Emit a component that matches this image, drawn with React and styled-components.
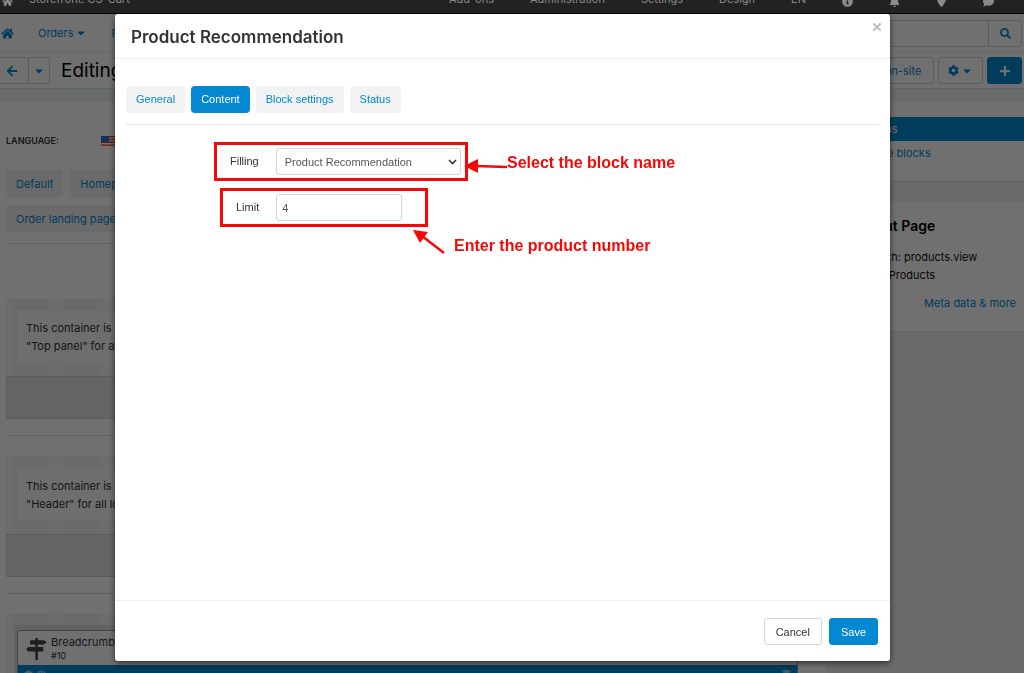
import React from 'react';
import styled, { createGlobalStyle } from 'styled-components';
import {
	FaArrowLeft,
	FaBell,
	FaCaretDown,
	FaCog,
	FaComment,
	FaHome,
	FaInfoCircle,
	FaMapMarker,
	FaPlus,
	FaPowerOff,
	FaSearch,
	FaTimes,
	FaTrashAlt
} from 'react-icons/fa';

const GlobalStyle = createGlobalStyle`
	* {
		box-sizing: border-box;
	}
	body {
		margin: 0;
		background: #eef2f2;
		color: #333;
		font: 11px/18px Inter, "Liberation Sans", sans-serif;
	}
	button, input, select {
		font: inherit;
		color: inherit;
	}
	a {
		color: #0388d1;
		text-decoration: none;
	}
	#root {
		height: 100vh;
		overflow: hidden;
	}
`;

const TopBar = styled.header`
	position: relative;
	z-index: 3;
	display: flex;
	align-items: flex-end;
	gap: 36px;
	height: 14px;
	padding: 0 30px 6px 2px;
	overflow: hidden;
	background: #222;
	border-bottom: 1px solid #000;
	color: #8a8a8a;
`;

const TopLink = styled.a`
	display: flex;
	color: inherit;
	line-height: 16px;
	white-space: nowrap;
`;

const StoreLink = styled(TopLink)`
	margin: 0 auto 0 -20px;
`;

const NavRow = styled.nav`
	display: flex;
	align-items: center;
	height: 39px;
	padding: 0 2px 0 1px;
	background: #fff;
	border-bottom: 1px solid #f0f0f0;
`;

const NavLink = styled.a`
	display: flex;
	align-items: center;
	gap: 2px;
	margin-right: 24px;
`;

const Search = styled.form`
	display: flex;
	height: 27px;
	width: 240px;
	margin-left: auto;
	border: 1px solid #c8d3da;
	border-radius: 3px;
`;

const SearchInput = styled.input`
	flex: 1;
	min-width: 0;
	border: 0;
	background: none;
`;

const SearchButton = styled.button`
	display: flex;
	align-items: center;
	justify-content: center;
	width: 33px;
	border: 0;
	border-left: 1px solid #c8d3da;
	background: none;
	color: #0388d1;
`;

const TitleRow = styled.div`
	display: flex;
	align-items: center;
	gap: 4px;
	height: 36px;
	padding: 0 2px 0 0;
	background: #fff;
	border-bottom: 1px solid #dde3e3;
`;

const BackGroup = styled.div`
	display: flex;
	margin-right: 7px;
	margin-left: -4px;
`;

const ToolButton = styled.button`
	display: flex;
	align-items: center;
	justify-content: center;
	gap: 2px;
	height: 27px;
	width: ${props => props.$width}px;
	padding: 0;
	border: 1px solid ${props => (props.$primary ? '#0388d1' : '#c8d3da')};
	border-radius: 3px;
	background: ${props => (props.$primary ? '#0388d1' : '#fff')};
	color: ${props => (props.$primary ? '#fff' : '#0388d1')};
	${BackGroup} & {
		border-radius: 0 3px 3px 0;
		margin-left: -1px;
	}
`;

const PageTitle = styled.h1`
	flex: 1;
	margin: 0;
	color: #000;
	font-size: 19px;
	font-weight: 400;
	line-height: 24px;
`;

const Columns = styled.div`
	display: grid;
	grid-template-columns: 1fr 198px;
	margin-top: 12px;
`;

const Main = styled.main`
	height: 700px;
	padding: 31px 28px 0 6px;
	background: #fff;
`;

const Language = styled.div`
	display: flex;
	align-items: center;
	gap: 42px;
	height: 18px;
	color: #333;
	font-size: 9px;
	font-weight: 600;
`;

const LayoutTabs = styled.div`
	display: flex;
	flex-wrap: wrap;
	gap: 8px 7px;
	width: 220px;
	margin-top: 20px;
`;

const LayoutTab = styled.a`
	padding: 5px 10px 4px;
	border-radius: 4px;
	background: #f2f2f2;
`;

const Rule = styled.hr`
	margin: ${props => props.$space};
	border: 0;
	border-top: 1px solid #dcdcdc;
`;

const Container = styled.section`
	height: 121px;
	display: flex;
	flex-direction: column;
	background: repeating-linear-gradient(90deg, #f0f0f0 0 34px, #f5f5f5 34px 50px) 8px 0, #f5f5f5;
`;

const Notice = styled.p`
	flex: 1;
	margin: 12px 11px 13px;
	padding: 9px 9px 8px;
	background: #fafafa;
	color: #333;
`;

const ContainerFoot = styled.div`
	height: 43px;
	border: 1px solid #cfcfcf;
	background: #e6e6e6;
`;

const BlockWrap = styled.div`
	flex: 1;
	margin: 11px 0 0 8px;
	padding: 5px 0 0 3px;
	background: #e0e0e0;
`;

const Block = styled.article`
	overflow: hidden;
	border: 1px solid #999;
	border-radius: 3px 3px 0 0;
	background: #fff;
`;

const BlockHead = styled.div`
	display: flex;
	gap: 4px;
	height: 34px;
	padding: 4px 8px;
	line-height: 14px;
	svg {
		margin-top: 3px;
	}
	small {
		display: block;
		font-size: 9px;
	}
`;

const BlockBar = styled.div`
	display: flex;
	gap: 4px;
	height: 24px;
	padding: 5px 6px;
	background: #0388d1;
	color: #b5dcf2;
	svg:last-child {
		margin-left: auto;
	}
`;

const Panel = styled.aside`
	margin-bottom: 20px;
	padding: ${props => props.$pad};
	background: #fff;
	border-bottom: 1px solid #dbe2e2;
`;

const BlockLink = styled.a`
	display: block;
	height: 24px;
	padding: 3px 21px;
	background: ${props => (props.$active ? '#0388d1' : 'transparent')};
	color: ${props => (props.$active ? '#fff' : '#0388d1')};
`;

const PanelTitle = styled.h2`
	margin: 0 0 12px;
	color: #000;
	font-size: 14px;
	font-weight: 600;
	line-height: 20px;
`;

const PanelText = styled.div`
	color: #111;
`;

const MetaLink = styled.a`
	display: block;
	margin-top: 10px;
	text-align: right;
`;

const Backdrop = styled.div`
	position: fixed;
	inset: 0;
	z-index: 2;
	display: flex;
	padding: 14px 134px 12px 115px;
	background: rgba(0, 0, 0, 0.56);
`;

const Modal = styled.div`
	flex: 1;
	display: flex;
	flex-direction: column;
	border-radius: 3px;
	background: #fff;
	box-shadow: 0 2px 6px rgba(0, 0, 0, 0.6);
	font-family: "Liberation Sans", Arial, sans-serif;
`;

const ModalHead = styled.div`
	display: flex;
	justify-content: space-between;
	height: 45px;
	padding: 12px 7px 0 16px;
	border-bottom: 1px solid #eee;
`;

const ModalTitle = styled.h3`
	margin: 0;
	color: #333;
	font: 600 17px/22px Inter, "Liberation Sans", sans-serif;
`;

const CloseButton = styled.button`
	display: flex;
	height: 12px;
	margin-top: -5px;
	padding: 0;
	border: 0;
	background: none;
	color: #c4c4c4;
`;

const ModalBody = styled.div`
	position: relative;
	flex: 1;
	padding: 27px 11px 0;
`;

const Tabs = styled.div`
	display: flex;
	gap: 6px;
	padding-bottom: 11px;
	margin-bottom: 17px;
	border-bottom: 1px solid #dde3ec;
`;

const Tab = styled.button`
	height: 27px;
	padding: 0 10px 2px;
	border: 0;
	border-radius: 4px;
	background: ${props => (props.$active ? '#0388d1' : '#f2f2f2')};
	color: ${props => (props.$active ? '#fff' : '#0388d1')};
`;

const Field = styled.div`
	display: flex;
	align-items: center;
	gap: 17px;
	width: ${props => props.$width}px;
	height: 39px;
	margin: 0 0 7px ${props => props.$indent}px;
	padding-left: 13px;
	border: 3px solid #f60808;
`;

const Label = styled.label`
	line-height: 27px;
	white-space: nowrap;
`;

const SelectWrap = styled.div`
	position: relative;
	width: 185px;
	svg {
		position: absolute;
		top: 10px;
		right: 4px;
		pointer-events: none;
	}
`;

const Select = styled.select`
	display: block;
	appearance: none;
	width: 100%;
	height: 27px;
	padding: 0 8px;
	border: 1px solid #ced6e0;
	border-radius: 3px;
	background: #fff;
	color: #555;
`;

const LimitInput = styled.input`
	width: 126px;
	height: 27px;
	padding: 0 5px;
	border: 1px solid #ced6e0;
	border-radius: 3px;
	color: #555;
`;

const Note = styled.div`
	position: absolute;
	top: ${props => props.$top}px;
	left: ${props => props.$left}px;
	display: flex;
	align-items: ${props => props.$align};
	gap: ${props => props.$gap}px;
	color: #f60808;
	font-size: 16px;
	font-weight: 700;
	line-height: 18px;
	white-space: nowrap;
`;

const ModalFoot = styled.div`
	display: flex;
	justify-content: flex-end;
	gap: 7px;
	height: 61px;
	padding: 17px 12px;
	border-top: 1px solid #eee;
`;

const FootButton = styled.button`
	height: 27px;
	padding: 0 11px;
	border: 1px solid ${props => (props.$primary ? '#0388d1' : '#d0dae4')};
	border-radius: 3px;
	background: ${props => (props.$primary ? '#0388d1' : '#fff')};
	color: ${props => (props.$primary ? '#fff' : '#333')};
`;

function Flag() {
	return (
		<svg width="16" height="10" viewBox="0 0 16 10">
			<rect width="16" height="10" fill="#fff" />
			<path d="M0 .7h16M0 3.5h16M0 6.3h16M0 9.1h16" stroke="#e0402f" strokeWidth="1.4" />
			<rect width="8" height="6" fill="#2a6fc9" />
		</svg>
	);
}

function SignsIcon() {
	return (
		<svg width="21" height="22" viewBox="0 0 21 22" fill="#444">
			<path d="M9.300 0h2.600v2.300H18l2.700 2-2.700 2.200h-6.100V9h5.400v4.500h-5.400V22H9.300v-8.500H2.500L0 11.200 2.500 9h6.800V6.500H4V2.300h5.300z" />
		</svg>
	);
}

function EmptyContainer({ name }) {
	return (
		<Container>
			<Notice>
				This container is NOT used,
				<br />
				"{name}" for all locations
			</Notice>
			<ContainerFoot />
		</Container>
	);
}

function App() {
	return (
		<>
			<GlobalStyle />
			<TopBar>
				<TopLink href="#"><FaHome size={11} /></TopLink>
				<StoreLink href="#">Storefront: CS-Cart</StoreLink>
				<TopLink href="#">Add-ons</TopLink>
				<TopLink href="#">Administration</TopLink>
				<TopLink href="#">Settings</TopLink>
				<TopLink href="#">Design</TopLink>
				<TopLink href="#">EN</TopLink>
				<TopLink href="#"><FaInfoCircle size={11} /></TopLink>
				<TopLink href="#"><FaBell size={11} /></TopLink>
				<TopLink href="#"><FaMapMarker size={11} /></TopLink>
				<TopLink href="#"><FaComment size={11} /></TopLink>
			</TopBar>
			<NavRow>
				<NavLink href="#"><FaHome size={13} /></NavLink>
				<NavLink href="#">Orders <FaCaretDown size={12} /></NavLink>
				<NavLink href="#">Products</NavLink>
				<Search>
					<SearchInput aria-label="Search" />
					<SearchButton type="button" aria-label="Find"><FaSearch size={11} /></SearchButton>
				</Search>
			</NavRow>
			<TitleRow>
				<BackGroup>
					<ToolButton $width={34} aria-label="Back"><FaArrowLeft size={12} /></ToolButton>
					<ToolButton $width={22} aria-label="History"><FaCaretDown size={12} /></ToolButton>
				</BackGroup>
				<PageTitle>Editing layout</PageTitle>
				<ToolButton $width={106}>Preview on-site</ToolButton>
				<ToolButton $width={45} aria-label="Settings"><FaCog size={11} /><FaCaretDown size={12} /></ToolButton>
				<ToolButton $width={35} $primary aria-label="Add"><FaPlus size={12} /></ToolButton>
			</TitleRow>
			<Columns>
				<Main>
					<Language>LANGUAGE: <Flag /></Language>
					<LayoutTabs>
						<LayoutTab href="#">Default</LayoutTab>
						<LayoutTab href="#">Homepage</LayoutTab>
						<LayoutTab href="#">Order landing page</LayoutTab>
					</LayoutTabs>
					<Rule $space="11px 0 54px" />
					<EmptyContainer name="Top panel" />
					<Rule $space="16px 0 20px" />
					<EmptyContainer name="Header" />
					<Rule $space="16px 0 20px" />
					<Container>
						<BlockWrap>
							<Block>
								<BlockHead>
									<SignsIcon />
									<div>Breadcrumbs<small>#10</small></div>
								</BlockHead>
								<BlockBar><FaCog size={9} /><FaPowerOff size={9} /><FaTrashAlt size={9} /></BlockBar>
							</Block>
						</BlockWrap>
					</Container>
				</Main>
				<div>
					<Panel $pad="16px 0 16px">
						<BlockLink href="#" $active>Locations</BlockLink>
						<BlockLink href="#">Available blocks</BlockLink>
					</Panel>
					<Panel $pad="14px 8px 19px 26px">
						<PanelTitle>Layout Page</PanelTitle>
						<PanelText>Dispatch: products.view</PanelText>
						<PanelText>Name: Products</PanelText>
						<MetaLink href="#">Meta data &amp; more</MetaLink>
					</Panel>
				</div>
			</Columns>
			<Backdrop>
				<Modal role="dialog" aria-label="Product Recommendation">
					<ModalHead>
						<ModalTitle>Product Recommendation</ModalTitle>
						<CloseButton aria-label="Close"><FaTimes size={12} /></CloseButton>
					</ModalHead>
					<ModalBody>
						<Tabs>
							<Tab>General</Tab>
							<Tab $active>Content</Tab>
							<Tab>Block settings</Tab>
							<Tab>Status</Tab>
						</Tabs>
						<Field $width={254} $indent={88}>
							<Label htmlFor="filling">Filling</Label>
							<SelectWrap>
								<Select id="filling">
									<option>Product Recommendation</option>
								</Select>
								<svg width="9" height="8" viewBox="0 0 9 8" fill="none" stroke="#333" strokeWidth="1.6">
									<path d="M1 2l3.500 3.500L8 2" />
								</svg>
							</SelectWrap>
						</Field>
						<Field $width={208} $indent={94}>
							<Label htmlFor="limit">Limit</Label>
							<LimitInput id="limit" defaultValue="4" />
						</Field>
						<Note $top={92} $left={349} $gap={0} $align="center">
							<svg width="43" height="24" viewBox="0 0 43 24">
								<path d="M0 15L14 8v14z" fill="#f60808" />
								<path d="M12 15l31 1" stroke="#f60808" strokeWidth="2.400" />
							</svg>
							Select the block name
						</Note>
						<Note $top={170} $left={298} $gap={9} $align="flex-end">
							<svg width="32" height="26" viewBox="0 0 32 26">
								<path d="M0 1l15 2-8 11z" fill="#f60808" />
								<path d="M9 7l22 17" stroke="#f60808" strokeWidth="2.400" />
							</svg>
							Enter the product number
						</Note>
					</ModalBody>
					<ModalFoot>
						<FootButton>Cancel</FootButton>
						<FootButton $primary>Save</FootButton>
					</ModalFoot>
				</Modal>
			</Backdrop>
		</>
	);
}

export default App;
